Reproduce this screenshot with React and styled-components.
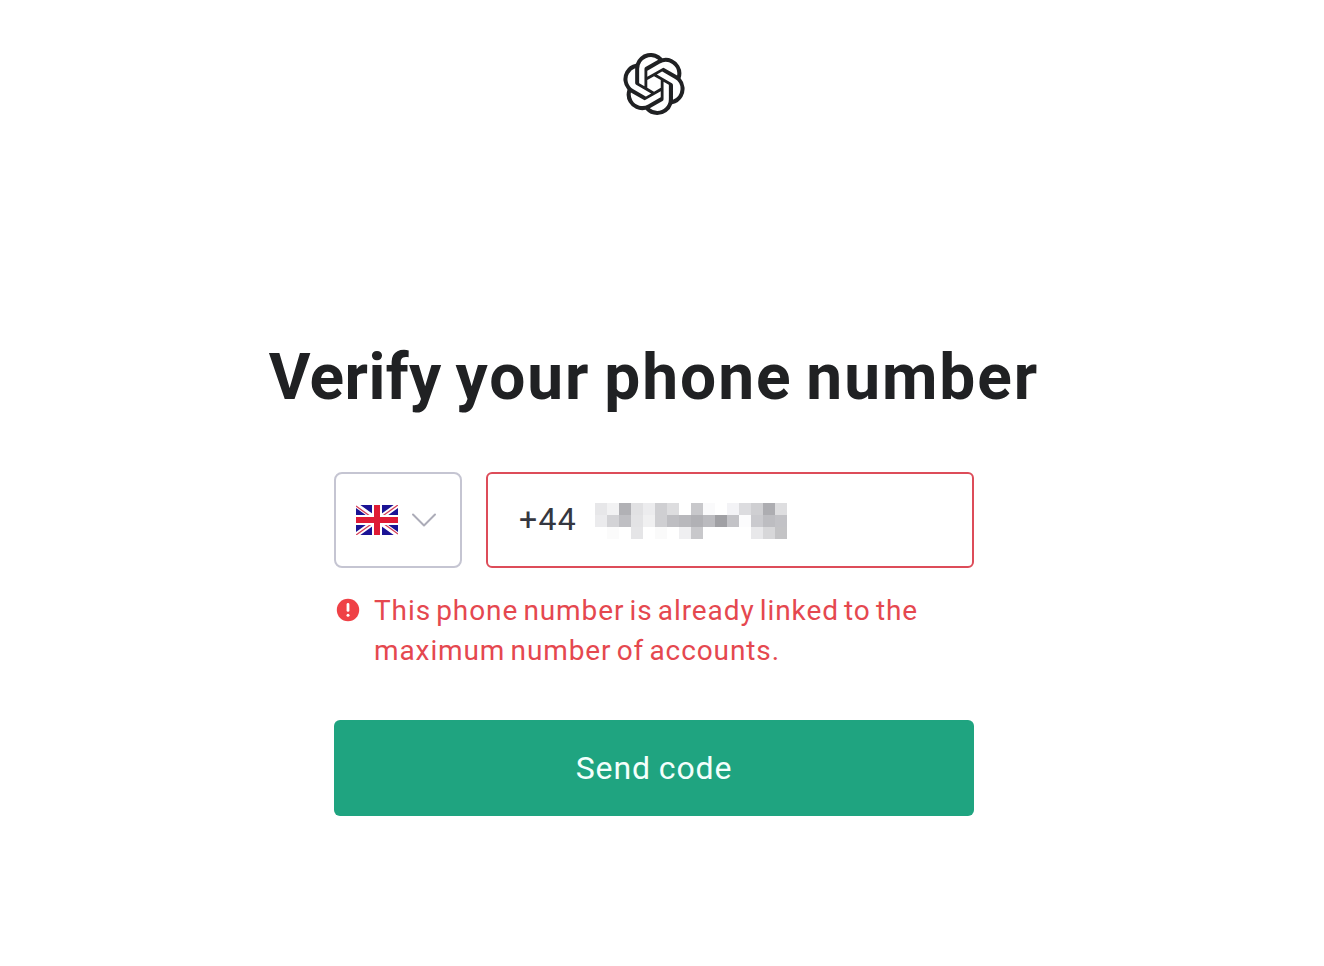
import React from 'react';
import styled, { createGlobalStyle } from 'styled-components';
import { SiOpenai } from 'react-icons/si';

const GlobalStyle = createGlobalStyle`
  * {
    box-sizing: border-box;
  }
  body {
    margin: 0;
    background: #fff;
    color: #202123;
    font-family: Roboto, 'Liberation Sans', sans-serif;
  }
`;
const Page = styled.main`
  display: flex;
  flex-direction: column;
  align-items: center;
  min-height: 966px;
  padding: 53px 16px 0 0;
`;
const Logo = styled(SiOpenai)`
  display: block;
  width: 62px;
  height: 62px;
`;
const Title = styled.h1`
  margin: 224px 0 0;
  font-size: 64px;
  font-weight: 700;
  line-height: 78px;
  letter-spacing: 1.95px;
  word-spacing: -4px;
  white-space: nowrap;
  span {
    letter-spacing: 0.4px;
  }
`;
const Form = styled.form`
  width: 640px;
  margin-top: 55px;
`;
const Fields = styled.div`
  display: flex;
  gap: 24px;
  height: 96px;
`;
const CountrySelect = styled.button`
  display: flex;
  align-items: center;
  gap: 13px;
  width: 128px;
  padding: 0 20px;
  border: 2px solid #c5c5d2;
  border-radius: 8px;
  background: #fff;
`;
const PhoneField = styled.div`
  display: flex;
  align-items: center;
  flex: 1;
  padding: 0 31px;
  border: 2px solid #dd4c59;
  border-radius: 6px;
`;
const Prefix = styled.span`
  width: 76px;
  padding-bottom: 2px;
  color: #353740;
  font-size: 32px;
  line-height: 40px;
  letter-spacing: 1.3px;
`;
const Mosaic = styled.div`
  display: grid;
  grid-template-columns: repeat(16, 12px);
  grid-auto-rows: 12px;
  padding-top: 2px;
`;
const Tile = styled.span`
  background: ${({ $shade }) => $shade};
`;
const ErrorMessage = styled.div`
  display: flex;
  gap: 14px;
  margin-top: 22px;
  padding-left: 2px;
  color: #ef4146;
  svg {
    flex: none;
    margin-top: 8px;
  }
`;
const ErrorText = styled.p`
  margin: 0;
  padding-top: 1px;
  color: #e5484f;
  font-size: 28px;
  line-height: 40px;
  letter-spacing: 0.9px;
  word-spacing: -2.6px;
  white-space: nowrap;
`;
const SubmitButton = styled.button`
  width: 100%;
  height: 96px;
  margin-top: 49px;
  padding: 0;
  border: 0;
  border-radius: 6px;
  background: #1fa480;
  color: #f4fffc;
  font-family: inherit;
  font-size: 32px;
  letter-spacing: 0.9px;
  word-spacing: -1px;
`;

// hidden digits, one list of greys per row
const shades = [
  ['#e7e7e9', '#f2f2f3', '#b1b1b5', '#e1e1e3', '#ececee', '#cfcfd2', '#dddddf', '#fff', '#c8c8cb', '#fafafb', '#fff', '#f3f3f6', '#dcdcdf', '#cfcfd2', '#adadb1', '#dedee0'],
  ['#ebebed', '#d3d3d6', '#bfbfc3', '#e3e3e5', '#f0f0f1', '#cfcfd2', '#bebec2', '#b8b8bc', '#b1b1b5', '#bbbbbf', '#a0a0a4', '#c3c3c7', '#fcfcfd', '#cacace', '#bdbdc1', '#c2c2c6'],
  ['#fff', '#fbfbfb', '#fff', '#e5e5e7', '#fff', '#fafafa', '#fff', '#efeff1', '#c8c8cb', '#fff', '#fff', '#fff', '#fff', '#e8e8ea', '#d7d7d9', '#c3c3c5'],
];

function UnitedKingdomFlag() {
  return (
    <svg width="42" height="30" viewBox="0 0 42 30" aria-label="United Kingdom">
      <path fill="#1b1395" d="M0 0h42v30H0z" />
      <path stroke="#fff" strokeWidth="5" d="M0 0l42 30M42 0L0 30" />
      <path stroke="#d5405a" strokeWidth="1.3" d="M0 1l18 13M42 29L24 16M42 0L23 13.5M0 30l19-13.5" />
      <path stroke="#fff" strokeWidth="10" d="M21 0v30M0 15h42" />
      <path stroke="#df1b35" strokeWidth="6" d="M21 0v30M0 15h42" />
    </svg>
  );
}

function Chevron() {
  return (
    <svg width="26" height="16" viewBox="0 0 26 16" fill="none">
      <path d="M2 2.5l11 11 11-11" stroke="#acacb8" strokeWidth="2" strokeLinecap="round" strokeLinejoin="round" />
    </svg>
  );
}

function ErrorIcon() {
  return (
    <svg width="24" height="24" viewBox="0 0 24 24">
      <circle cx="12" cy="12" r="11.2" fill="currentColor" />
      <path d="M12 6.4v6" stroke="#fff" strokeWidth="2.8" strokeLinecap="round" />
      <circle cx="12" cy="17.2" r="1.5" fill="#fff" />
    </svg>
  );
}

function App() {
  return (
    <>
      <GlobalStyle />
      <Page>
        <Logo />
        <Title>
          <span>Verify</span> your phone number
        </Title>
        <Form>
          <Fields>
            <CountrySelect type="button">
              <UnitedKingdomFlag />
              <Chevron />
            </CountrySelect>
            <PhoneField>
              <Prefix>+44</Prefix>
              <Mosaic>
                {shades.flat().map((shade, index) => (
                  <Tile key={index} $shade={shade} />
                ))}
              </Mosaic>
            </PhoneField>
          </Fields>
          <ErrorMessage>
            <ErrorIcon />
            <ErrorText>
              This phone number is already linked to the
              <br />
              maximum number of accounts.
            </ErrorText>
          </ErrorMessage>
          <SubmitButton type="button">Send code</SubmitButton>
        </Form>
      </Page>
    </>
  );
}

export default App;
